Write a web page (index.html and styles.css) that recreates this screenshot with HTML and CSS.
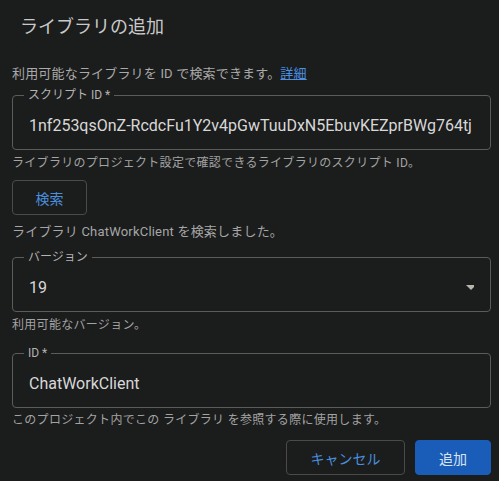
FILE: index.html
```html
<!DOCTYPE html>
<html lang="ja">
<head>
<meta charset="utf-8">
<link rel="stylesheet" href="styles.css">
</head>
<body>
<div class="dialog">
  <h1 class="title">ライブラリの追加</h1>
  <p class="intro">利用可能なライブラリを ID で検索できます。<a class="link" href="#">詳細</a></p>

  <fieldset class="field field-first">
    <legend class="legend">スクリプト ID *</legend>
    <div class="value">1nf253qsOnZ-RcdcFu1Y2v4pGwTuuDxN5EbuvKEZprBWg764tj</div>
  </fieldset>
  <p class="helper">ライブラリのプロジェクト設定で確認できるライブラリのスクリプト ID。</p>

  <button class="btn btn-outline btn-search">検索</button>
  <p class="status">ライブラリ ChatWorkClient を検索しました。</p>

  <fieldset class="field field-version">
    <legend class="legend">バージョン</legend>
    <div class="value select">
      <span>19</span>
      <svg class="arrow" width="10" height="5" viewBox="0 0 10 5"><path d="M0 0 L10 0 L5 5 Z" fill="#b9b6b0"/></svg>
    </div>
  </fieldset>
  <p class="helper">利用可能なバージョン。</p>

  <fieldset class="field field-id">
    <legend class="legend">ID *</legend>
    <div class="value">ChatWorkClient</div>
  </fieldset>
  <p class="helper helper-last">このプロジェクト内でこの ライブラリ を参照する際に使用します。</p>

  <div class="actions">
    <button class="btn btn-outline btn-cancel">キャンセル</button>
    <button class="btn btn-primary">追加</button>
  </div>
</div>
</body>
</html>
```

FILE: styles.css
```css
html, body {
  margin: 0;
  padding: 0;
  background: #1b1c1c;
}

body {
  font-family: Roboto, "Noto Sans CJK JP", sans-serif;
  color: #a8a8a8;
  width: 499px;
  height: 481px;
  overflow: hidden;
}

.dialog {
  padding: 0 8px 0 12px;
}

.title {
  margin: 15px 0 0 8px;
  font-size: 18px;
  line-height: 24px;
  font-weight: 400;
  color: #c9c9c9;
}

.intro {
  margin: 26px 0 0 0;
  font-size: 13px;
  line-height: 18px;
  letter-spacing: 0.18px;
  color: #a9a9a9;
}

.link {
  color: #4b90e2;
  text-decoration: underline;
}

.field {
  margin: 5px 0 0 0;
  padding: 0 16px;
  border: 1px solid #5b5b5b;
  border-radius: 4px;
  min-width: 0;
}

.field-version {
  margin-top: 9px;
}

.field-id {
  margin-top: 13px;
}

.legend {
  padding: 0 4px;
  margin-left: -5px;
  font-size: 12px;
  line-height: 14px;
  color: #b3b3b3;
}

.value {
  height: 46px;
  display: flex;
  align-items: center;
  font-size: 16px;
  color: #d8d8d8;
  white-space: nowrap;
  overflow: hidden;
  padding-bottom: 1px;
}

.select {
  justify-content: space-between;
}

.arrow {
  display: block;
  margin-right: -2px;
}

.helper {
  margin: 5px 0 0 0;
  font-size: 12px;
  line-height: 16px;
  letter-spacing: 0.3px;
  color: #a3a3a3;
}

.helper-last {
  margin-top: 4px;
}

.btn {
  font-family: Roboto, "Noto Sans CJK JP", sans-serif;
  font-size: 14px;
  height: 35px;
  border-radius: 4px;
  padding: 0;
  cursor: pointer;
}

.btn-outline {
  background: transparent;
  border: 1px solid #4a4a4a;
  color: #4a8fdc;
}

.btn-search {
  display: block;
  margin-top: 9px;
  width: 75px;
}

.status {
  margin: 8px 0 0 0;
  font-size: 13px;
  line-height: 18px;
  letter-spacing: 0.2px;
  color: #a6a6a6;
}

.actions {
  display: flex;
  justify-content: flex-end;
  gap: 10px;
  margin-top: 12px;
}

.btn-cancel {
  width: 119px;
}

.btn-primary {
  width: 76px;
  background: #1a5db8;
  border: 1px solid #1a5db8;
  color: #d9e3f2;
}
```
